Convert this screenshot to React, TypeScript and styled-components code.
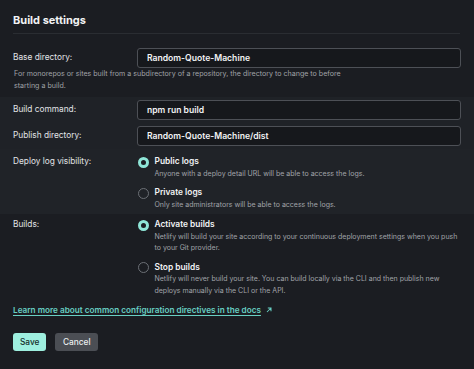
import React from 'react';
import styled, { createGlobalStyle } from 'styled-components';

const GlobalStyle = createGlobalStyle`
  html, body {
    margin: 0;
    padding: 0;
    background: #1b1d22;
  }
  body {
    font-family: Inter, "Noto Sans", "Liberation Sans", sans-serif;
    color: #e4e6e9;
    -webkit-font-smoothing: antialiased;
  }
  * { box-sizing: border-box; }
`;

type Option = { title: string; desc: string; checked?: boolean };

const logOptions: Option[] = [
  { title: 'Public logs', desc: 'Anyone with a deploy detail URL will be able to access the logs.', checked: true },
  { title: 'Private logs', desc: 'Only site administrators will be able to access the logs.' },
];

const buildOptions: Option[] = [
  {
    title: 'Activate builds',
    desc: 'Netlify will build your site according to your continuous deployment settings when you push to your Git provider.',
    checked: true,
  },
  {
    title: 'Stop builds',
    desc: 'Netlify will never build your site. You can build locally via the CLI and then publish new deploys manually via the CLI or the API.',
  },
];

function RadioList({ options }: { options: Option[] }) {
  return (
    <Choices>
      {options.map((o) => (
        <Choice key={o.title}>
          <Radio $checked={!!o.checked} />
          <ChoiceText>
            <ChoiceTitle>{o.title}</ChoiceTitle>
            <ChoiceDesc>{o.desc}</ChoiceDesc>
          </ChoiceText>
        </Choice>
      ))}
    </Choices>
  );
}

export default function App() {
  return (
    <>
      <GlobalStyle />
      <Panel>
        <Header>
          <Title>Build settings</Title>
        </Header>

        <Section $pad="14px 13px 5px">
          <FieldRow>
            <Label>Base directory:</Label>
            <TextInput defaultValue="Random-Quote-Machine" readOnly />
          </FieldRow>
          <Help>
            For monorepos or sites built from a subdirectory of a repository, the directory to change to before
            starting a build.
          </Help>
        </Section>

        <Section $tone="#1f2227" $pad="3px 13px" $gap={6}>
          <FieldRow>
            <Label>Build command:</Label>
            <TextInput defaultValue="npm run build" readOnly />
          </FieldRow>
          <FieldRow>
            <Label>Publish directory:</Label>
            <TextInput defaultValue="Random-Quote-Machine/dist" readOnly />
          </FieldRow>
        </Section>

        <Section $tone="#202328" $pad="7px 13px 4px">
          <ChoiceRow>
            <Label>Deploy log visibility:</Label>
            <RadioList options={logOptions} />
          </ChoiceRow>
        </Section>

        <Section $pad="5px 13px 0">
          <ChoiceRow>
            <Label>Builds:</Label>
            <RadioList options={buildOptions} />
          </ChoiceRow>
        </Section>

        <Footer>
          <DocsLink href="#">
            Learn more about common configuration directives in the docs
          </DocsLink>
          <ExtIcon viewBox="0 0 10 10" aria-hidden>
            <path d="M2.5 7.5 L7.5 2.5 M3.5 2.5 H7.5 V6.5" />
          </ExtIcon>
        </Footer>

        <Actions>
          <Button $primary>Save</Button>
          <Button>Cancel</Button>
        </Actions>
      </Panel>
    </>
  );
}

const Panel = styled.div`
  width: 474px;
  min-height: 369px;
  background: #1b1d22;
`;

const Header = styled.header`
  margin: 0 14px 0 13px;
  padding: 13px 0 6px;
  border-bottom: 1px solid #2a2d32;
`;

const Title = styled.h2`
  margin: 0;
  font-size: 11px;
  line-height: 14px;
  font-weight: 700;
  color: #f2f3f5;
`;

const Section = styled.section<{ $tone?: string; $pad: string; $gap?: number }>`
  display: flex;
  flex-direction: column;
  gap: ${(p) => p.$gap ?? 0}px;
  padding: ${(p) => p.$pad};
  background: ${(p) => p.$tone ?? 'transparent'};
`;

const FieldRow = styled.div`
  display: grid;
  grid-template-columns: 124px 1fr;
  align-items: center;
  height: 20px;
`;

const ChoiceRow = styled.div`
  display: grid;
  grid-template-columns: 125px 1fr;
  align-items: start;
`;

const Label = styled.label`
  font-size: 8.3px;
  line-height: 11.5px;
  color: #e2e4e7;
`;

const TextInput = styled.input`
  height: 20px;
  width: 100%;
  padding: 0 9px;
  border: 1px solid #4d5056;
  border-radius: 3px;
  background: #16181c;
  color: #f2f3f5;
  font-family: inherit;
  font-size: 8.6px;
  font-weight: 600;
  outline: none;
`;

const Help = styled.p`
  margin: 0;
  padding-left: 1px;
  max-width: 350px;
  font-size: 7.1px;
  line-height: 12px;
  color: #a0a3a8;
`;

const Choices = styled.div`
  display: flex;
  flex-direction: column;
  gap: 8px;
`;

const Choice = styled.div`
  display: flex;
  align-items: flex-start;
  gap: 5.5px;
`;

const Radio = styled.span<{ $checked: boolean }>`
  flex: none;
  width: 11px;
  height: 11px;
  margin-top: 0.5px;
  border-radius: 50%;
  border: ${(p) => (p.$checked ? '3.5px solid #8fe6d8' : '1px solid #6c7076')};
  background: ${(p) => (p.$checked ? '#1b1e23' : 'transparent')};
`;

const ChoiceText = styled.div`
  display: flex;
  flex-direction: column;
`;

const ChoiceTitle = styled.span`
  font-size: 8.4px;
  line-height: 11.5px;
  font-weight: 600;
  color: #f2f3f5;
`;

const ChoiceDesc = styled.span`
  font-size: 7px;
  line-height: 11.5px;
  color: #a0a3a8;
`;

const Footer = styled.div`
  display: flex;
  align-items: center;
  gap: 4px;
  padding: 8px 13px 0;
  height: 20px;
`;

const DocsLink = styled.a`
  font-size: 8.2px;
  line-height: 12px;
  font-weight: 600;
  color: #68cfc3;
  text-decoration: underline;
  text-underline-offset: 1.5px;
`;

const ExtIcon = styled.svg`
  width: 8px;
  height: 8px;
  fill: none;
  stroke: #68cfc3;
  stroke-width: 1.3;
`;

const Actions = styled.div`
  display: flex;
  gap: 9px;
  padding: 17px 13px 0;
`;

const Button = styled.button<{ $primary?: boolean }>`
  height: 18px;
  padding: 0 ${(p) => (p.$primary ? 7 : 7.5)}px;
  border: none;
  border-radius: 3px;
  font-family: inherit;
  font-size: 8.3px;
  font-weight: 500;
  background: ${(p) => (p.$primary ? '#9eefdf' : '#4b4e54')};
  color: ${(p) => (p.$primary ? '#17302c' : '#eceef0')};
`;
